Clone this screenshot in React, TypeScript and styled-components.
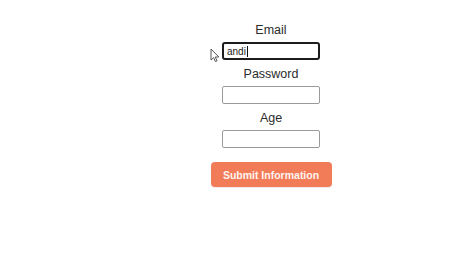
import React from "react"
import styled, { createGlobalStyle } from "styled-components"

const GlobalStyle = createGlobalStyle`
    body {
        margin: 0;
        background: #ffffff;
        font-family: "Liberation Sans", Arial, sans-serif;
    }
`;

const Page = styled.main`
    position: relative;
    width: 474px;
    height: 267px;
    padding: 22px 0 0 191px;
    box-sizing: border-box;
`;

const Form = styled.form`
    width: 160px;
    display: flex;
    flex-direction: column;
    align-items: center;
`;

const Field = styled.div`
    display: flex;
    flex-direction: column;
    align-items: center;
    gap: 5px;
    margin-bottom: 6px;
`;

const Label = styled.label`
    font-size: 12.5px;
    line-height: 14px;
    padding-top: 1px;
    color: #2b2b2b;
`;

const Input = styled.div<{ $focused?: boolean }>`
    width: 98px;
    height: 18px;
    box-sizing: border-box;
    border: ${p => (p.$focused ? "2px solid #1c1c1c" : "1px solid #9a9a9a")};
    border-radius: ${p => (p.$focused ? "3px" : "2px")};
    background: #fff;
    display: flex;
    align-items: center;
    padding-left: ${p => (p.$focused ? "3px" : "4px")};
    font-size: 10px;
    color: #222;
`;

const Caret = styled.span`
    display: inline-block;
    width: 1px;
    height: 11px;
    background: #111;
    margin-left: 1px;
`;

const SubmitButton = styled.button`
    margin-top: 8px;
    width: 121px;
    height: 25px;
    border: none;
    border-radius: 4px;
    background: #f27b58;
    color: #fff4ef;
    font-family: "Liberation Sans", Arial, sans-serif;
    font-weight: bold;
    font-size: 10.5px;
    padding: 0;
    box-shadow: 0 1px 1px rgba(0, 0, 0, 0.08);
`;

const Pointer = styled.svg`
    position: absolute;
    left: 210px;
    top: 48px;
`;

export default function App() {
    return (
        <>
            <GlobalStyle />
            <Page>
                <Form onSubmit={e => e.preventDefault()}>
                    <Field>
                        <Label>Email</Label>
                        <Input $focused>andi<Caret /></Input>
                    </Field>
                    <Field>
                        <Label>Password</Label>
                        <Input />
                    </Field>
                    <Field>
                        <Label>Age</Label>
                        <Input />
                    </Field>
                    <SubmitButton type="submit">Submit Information</SubmitButton>
                </Form>
                <Pointer width="10" height="15" viewBox="0 0 10 15">
                    <path
                        d="M1 1 L1 12 L3.6 9.6 L5.4 13.6 L7 12.9 L5.3 9 L8.8 9 Z"
                        fill="#fff"
                        stroke="#555"
                        strokeWidth="1"
                        strokeLinejoin="round"
                    />
                </Pointer>
            </Page>
        </>
    )
}
